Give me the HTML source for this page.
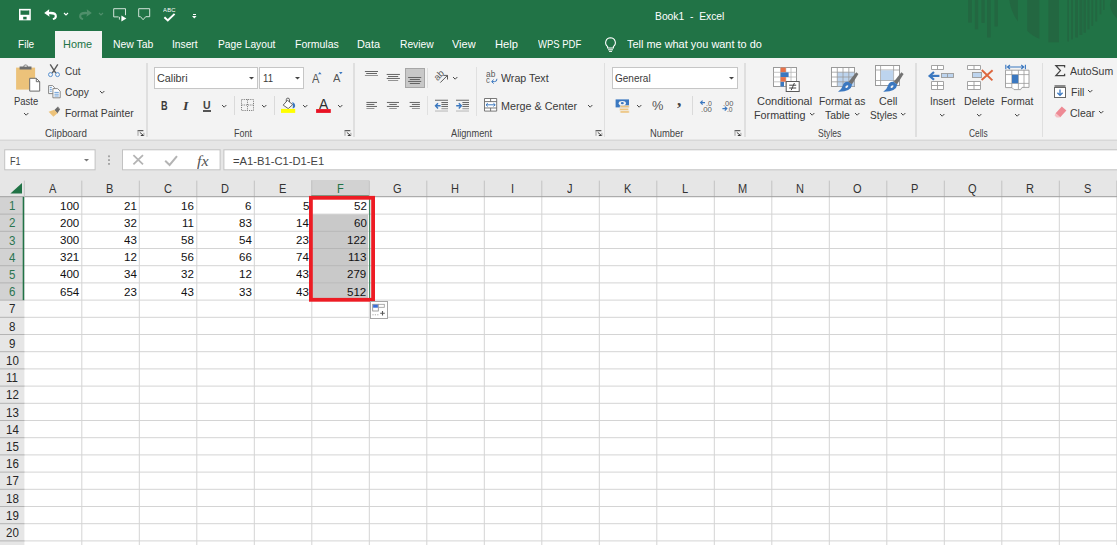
<!DOCTYPE html>
<html><head><meta charset="utf-8"><title>Book1 - Excel</title>
<style>
html,body{margin:0;padding:0}
body{width:1117px;height:545px;overflow:hidden;position:relative;background:#fff;font-family:"Liberation Sans",sans-serif}
.t{position:absolute;white-space:pre;line-height:1;transform-origin:0 0}
.a{position:absolute}
svg{overflow:visible}
</style></head><body>
<div class="a" style="left:0px;top:0px;width:1117px;height:57.5px;background:#217346;"></div>
<svg class="a" style="left:0px;top:0px" width="1117" height="57" viewBox="0 0 1117 57"><rect x="968.2" y="0" width="3.6" height="22.6" fill="#236741"/><rect x="974.9" y="0" width="3.3" height="29.4" fill="#236741"/><rect x="981.4" y="0" width="3.3" height="22.9" fill="#236741"/><rect x="987.1" y="0" width="3.6" height="37.5" fill="#236741"/><rect x="994.5" y="0" width="3.3" height="26.5" fill="#236741"/><rect x="1048.4" y="0" width="10.6" height="42.3" fill="#236741"/><rect x="1067.3" y="0" width="1.7" height="41.5" fill="#236741"/><rect x="1071.2" y="0" width="1.8" height="39.4" fill="#236741"/><rect x="1075.2" y="0" width="2.8" height="37.5" fill="#236741"/><rect x="1079.5" y="0" width="2.9" height="35" fill="#236741"/><rect x="1083.5" y="0" width="2.5" height="32.7" fill="#236741"/><rect x="1087.4" y="0" width="2.1" height="29.4" fill="#236741"/><rect x="1091.4" y="0" width="1.7" height="25.8" fill="#236741"/><rect x="1095.3" y="0" width="1.8" height="21.5" fill="#236741"/><rect x="1099.6" y="0" width="1.8" height="14.3" fill="#236741"/><rect x="1103.2" y="0" width="1.4" height="10" fill="#236741"/><path d="M1009.3 0 Q1011 12 1017.9 21.5 V0 Z" fill="#236741"/><path d="M1027.2 0 V30.8 Q1032 36 1039.4 38.7 V0 Z" fill="#236741"/><path d="M1111 0 Q1107.5 9 1117 18.6 V0 Z" fill="#236741"/></svg>
<span class="t" style="left:654.60px;top:10.57px;font-size:11px;color:#fff;transform:scaleX(0.9381);">Book1  -  Excel</span>
<svg class="a" style="left:19.2px;top:8.6px" width="11.8" height="11.2" viewBox="0 0 11.8 11.2"><rect x="0.75" y="0.6" width="10.3" height="10" fill="none" stroke="#fff" stroke-width="1.5"/><rect x="1" y="5.8" width="9.8" height="5" fill="#fff"/><rect x="4.2" y="7.8" width="3.4" height="2.6" fill="#217346"/><rect x="2.6" y="0.4" width="6.6" height="1.1" fill="#fff" opacity="0.55"/></svg>
<svg class="a" style="left:44px;top:9px" width="14" height="12" viewBox="0 0 14 12"><path d="M0.2 3.9 L5.2 0.2 L5 2.9 Q12.9 2.4 12.9 7.2 Q12.9 10.2 9.2 11 L8.6 9.4 Q10.9 8.6 10.8 7 Q10.6 4.8 5 5.2 L5.6 7.8 Z" fill="#fff"/></svg>
<svg class="a" style="left:63.1px;top:12.1px" width="6" height="4" viewBox="0 0 6 4"><path d="M1 1 L3 3 L5 1" fill="none" stroke="#fff" stroke-width="1.1"/></svg>
<svg class="a" style="left:78.2px;top:9px" width="14" height="12" viewBox="0 0 14 12"><path d="M13.8 3.9 L8.8 0.2 L9 2.9 Q1.1 2.4 1.1 7.2 Q1.1 10.2 4.8 11 L5.4 9.4 Q3.1 8.6 3.2 7 Q3.4 4.8 9 5.2 L8.4 7.8 Z" fill="#4f8f6b"/></svg>
<svg class="a" style="left:97.8px;top:12.1px" width="6" height="4" viewBox="0 0 6 4"><path d="M1 1 L3 3 L5 1" fill="none" stroke="#4f8f6b" stroke-width="1.1"/></svg>
<svg class="a" style="left:113px;top:8px" width="14" height="14" viewBox="0 0 14 14"><path d="M5.6 8.9 H0.7 V0.7 H12.5 V7.2" fill="none" stroke="#e4efe8" stroke-width="0.9"/><path d="M6.4 8.9 V11.6" stroke="#e4efe8" stroke-width="0.9"/><path d="M8.4 7.4 L13.4 10.6 L8.4 13.6 Z" fill="#fff"/></svg>
<svg class="a" style="left:138px;top:8px" width="13" height="13" viewBox="0 0 13 13"><path d="M0.7 0.7 H11.7 V8.7 H7.7 L5.1 11.7 L2.5 8.7 H0.7 Z" fill="none" stroke="#e4efe8" stroke-width="0.9"/></svg>
<span class="t" style="left:163.30px;top:6.55px;font-size:6.2px;color:#fff;transform:scaleX(0.9413);letter-spacing:0.3px;">ABC</span>
<svg class="a" style="left:163px;top:13px" width="13" height="9" viewBox="0 0 13 9"><path d="M1.4 4.2 L4.8 7.4 L11.6 0.9" fill="none" stroke="#fff" stroke-width="2"/></svg>
<div class="a" style="left:192.6px;top:13.5px;width:3.6px;height:1px;background:#fff;"></div>
<svg class="a" style="left:192.1px;top:15.9px" width="4.6" height="2.6" viewBox="0 0 4.6 2.6"><path d="M0 0 H4.6 L2.3 2.6 Z" fill="#fff"/></svg>
<div class="a" style="left:55px;top:31px;width:46.5px;height:27px;background:#f3f3f3;"></div>
<span class="t" style="left:18.00px;top:38.57px;font-size:11px;color:#fff;transform:scaleX(0.9140);">File</span>
<span class="t" style="left:112.50px;top:38.57px;font-size:11px;color:#fff;transform:scaleX(0.9460);">New Tab</span>
<span class="t" style="left:172.40px;top:38.57px;font-size:11px;color:#fff;transform:scaleX(0.9305);">Insert</span>
<span class="t" style="left:217.80px;top:38.57px;font-size:11px;color:#fff;transform:scaleX(0.9292);">Page Layout</span>
<span class="t" style="left:294.50px;top:38.57px;font-size:11px;color:#fff;transform:scaleX(0.9533);">Formulas</span>
<span class="t" style="left:357.20px;top:38.57px;font-size:11px;color:#fff;transform:scaleX(0.9899);">Data</span>
<span class="t" style="left:399.80px;top:38.57px;font-size:11px;color:#fff;transform:scaleX(0.9316);">Review</span>
<span class="t" style="left:452.40px;top:38.57px;font-size:11px;color:#fff;transform:scaleX(0.9981);">View</span>
<span class="t" style="left:495.00px;top:38.57px;font-size:11px;color:#fff;transform:scaleX(1.0167);">Help</span>
<span class="t" style="left:537.60px;top:38.57px;font-size:11px;color:#fff;transform:scaleX(0.8621);">WPS PDF</span>
<span class="t" style="left:627.20px;top:38.57px;font-size:11px;color:#fff;transform:scaleX(0.9931);">Tell me what you want to do</span>
<span class="t" style="left:63.40px;top:38.57px;font-size:11px;color:#217346;transform:scaleX(0.9951);">Home</span>
<svg class="a" style="left:603.5px;top:37px" width="13" height="15" viewBox="0 0 13 15"><path d="M6.5 0.8 A4.9 4.9 0 0 1 9.4 9.6 V11 H3.6 V9.6 A4.9 4.9 0 0 1 6.5 0.8 Z" fill="none" stroke="#fff" stroke-width="1.1"/><path d="M4 12.8 H9 M5 14.4 H8" stroke="#fff" stroke-width="1"/></svg>
<div class="a" style="left:0px;top:57.5px;width:1117px;height:82px;background:#f3f3f3;"></div>
<div class="a" style="left:146.1px;top:62.5px;width:1.8px;height:74px;background:#dfdfdf;"></div>
<div class="a" style="left:353.1px;top:62.5px;width:1.8px;height:74px;background:#dfdfdf;"></div>
<div class="a" style="left:603.7px;top:62.5px;width:1.8px;height:74px;background:#dfdfdf;"></div>
<div class="a" style="left:743.8px;top:62.5px;width:1.8px;height:74px;background:#dfdfdf;"></div>
<div class="a" style="left:915.3px;top:62.5px;width:1.8px;height:74px;background:#dfdfdf;"></div>
<div class="a" style="left:1041.6px;top:62.5px;width:1.8px;height:74px;background:#dfdfdf;"></div>
<svg class="a" style="left:15px;top:64px" width="26" height="30" viewBox="0 0 26 30"><rect x="1.1" y="3.6" width="19" height="22" fill="#ecc27a"/><path d="M4.6 5.6 V2.6 H8.4 Q8.4 0.4 10.6 0.4 Q12.8 0.4 12.8 2.6 H16.5 V5.6 Z" fill="#6e6e6e"/><rect x="9.4" y="1.4" width="2.4" height="1.3" fill="#f3f3f3"/><path d="M14.7 14.3 H21.3 L24.7 17.7 V27.1 H14.7 Z" fill="#fff" stroke="#6b6b6b" stroke-width="1"/><path d="M21.3 14.3 V17.7 H24.7" fill="none" stroke="#6b6b6b" stroke-width="1"/></svg>
<span class="t" style="left:13.80px;top:95.87px;font-size:11px;color:#3a3a3a;transform:scaleX(0.8603);">Paste</span>
<svg class="a" style="left:22.8px;top:112.1px" width="6.4" height="4.2" viewBox="0 0 6.4 4.2"><path d="M1 1 L3.2 3.2 L5.4 1" fill="none" stroke="#444" stroke-width="1"/></svg>
<svg class="a" style="left:47px;top:64px" width="14" height="14" viewBox="0 0 14 14"><path d="M3.2 0.4 L8.8 9.2 M10.8 0.4 L5.2 9.2" fill="none" stroke="#5a5a5a" stroke-width="1.4"/><circle cx="3.5" cy="10.6" r="2" fill="none" stroke="#4a88cc" stroke-width="0.9"/><circle cx="10.5" cy="10.6" r="2" fill="none" stroke="#4a88cc" stroke-width="0.9"/></svg>
<span class="t" style="left:64.70px;top:65.97px;font-size:11px;color:#3a3a3a;transform:scaleX(0.9055);">Cut</span>
<svg class="a" style="left:48px;top:85px" width="13" height="14" viewBox="0 0 13 14"><path d="M0.6 0.6 H4.6 L6.4 2.4 V8.6 H0.6 Z" fill="#fff" stroke="#7a7a7a" stroke-width="0.9"/><path d="M4.9 3.6 H9.6 L12.2 6.2 V12.8 H4.9 Z" fill="#fff" stroke="#7a7a7a" stroke-width="0.9"/><path d="M6.4 7.4 H10.8 M6.4 9.2 H10.8 M6.4 11 H10.8" stroke="#4a88cc" stroke-width="0.8"/><path d="M1.8 2.6 H3.8 M1.8 4.4 H3.8 M1.8 6.2 H3.8" stroke="#4a88cc" stroke-width="0.8"/></svg>
<span class="t" style="left:64.70px;top:86.87px;font-size:11px;color:#3a3a3a;transform:scaleX(0.9307);">Copy</span>
<svg class="a" style="left:99px;top:89.5px" width="6.4" height="4.2" viewBox="0 0 6.4 4.2"><path d="M1 1 L3.2 3.2 L5.4 1" fill="none" stroke="#444" stroke-width="1"/></svg>
<svg class="a" style="left:48px;top:106px" width="14" height="13" viewBox="0 0 14 13"><path d="M6.5 4 L9.9 0.6 L12.2 2.9 L9.3 7.4 Z" fill="#6a6a6a"/><path d="M0.6 5.7 L6.3 3.8 L9.5 7.2 L5.4 10.8 Z" fill="#ecc27a"/><path d="M10.3 1.6 L11.4 2.7" stroke="#f3f3f3" stroke-width="0.7"/></svg>
<span class="t" style="left:64.70px;top:107.67px;font-size:11px;color:#3a3a3a;transform:scaleX(0.9444);">Format Painter</span>
<span class="t" style="left:44.60px;top:128.57px;font-size:10.4px;color:#444;transform:scaleX(0.9435);">Clipboard</span>
<svg class="a" style="left:137.1px;top:130.3px" width="8" height="7" viewBox="0 0 8 7"><path d="M0.6 0.7 H6.4" stroke="#3a3a3a" stroke-width="1" fill="none"/><path d="M1 0.7 V5.8" stroke="#a0a0a0" stroke-width="1" fill="none"/><path d="M2.8 2.4 L6.2 5.2" stroke="#444" stroke-width="1" fill="none"/><path d="M3.8 5.5 H7" stroke="#3a3a3a" stroke-width="1" fill="none"/><path d="M6.9 2.8 V5.8" stroke="#a0a0a0" stroke-width="1" fill="none"/></svg>
<div class="a" style="left:154px;top:67px;width:103.5px;height:22px;background:#fff;border:1px solid #c6c6c6;box-sizing:border-box;"></div>
<span class="t" style="left:156.60px;top:72.77px;font-size:11px;color:#3a3a3a;transform:scaleX(0.9816);">Calibri</span>
<svg class="a" style="left:248.5px;top:77.1px" width="5" height="2.6" viewBox="0 0 5 2.6"><path d="M0 0 H5 L2.5 2.6 Z" fill="#444"/></svg>
<div class="a" style="left:259.4px;top:67px;width:44.6px;height:22px;background:#fff;border:1px solid #c6c6c6;box-sizing:border-box;"></div>
<span class="t" style="left:262.60px;top:72.77px;font-size:11px;color:#3a3a3a;transform:scaleX(0.8757);">11</span>
<svg class="a" style="left:294.9px;top:77.1px" width="5" height="2.6" viewBox="0 0 5 2.6"><path d="M0 0 H5 L2.5 2.6 Z" fill="#444"/></svg>
<span class="t" style="left:312.40px;top:72.64px;font-size:12px;color:#555;transform:scaleX(0.9245);">A</span>
<svg class="a" style="left:318.1px;top:71.5px" width="3.6" height="2.2" viewBox="0 0 3.6 2.2"><path d="M0 2.2 L1.8 0 L3.6 2.2 Z" fill="#3b78c0"/></svg>
<span class="t" style="left:333.20px;top:73.44px;font-size:11.4px;color:#555;transform:scaleX(0.9732);">A</span>
<svg class="a" style="left:338.7px;top:71.9px" width="3.6" height="2.2" viewBox="0 0 3.6 2.2"><path d="M0 0 L1.8 2.2 L3.6 0 Z" fill="#3b78c0"/></svg>
<span class="t" style="left:160.90px;top:99.74px;font-size:12px;color:#3a3a3a;transform:scaleX(0.7616);font-weight:bold;">B</span>
<span class="t" style="left:183.40px;top:99.40px;font-size:13px;color:#3a3a3a;transform:scaleX(1.0674);font-family:'Liberation Serif',serif;font-weight:bold;font-style:italic;">I</span>
<span class="t" style="left:203.20px;top:99.86px;font-size:11.5px;color:#444;transform:scaleX(0.9151);font-weight:bold;">U</span>
<div class="a" style="left:203px;top:110.4px;width:8.2px;height:1.2px;background:#555;"></div>
<svg class="a" style="left:220.8px;top:104.1px" width="6.4" height="4.2" viewBox="0 0 6.4 4.2"><path d="M1 1 L3.2 3.2 L5.4 1" fill="none" stroke="#444" stroke-width="1"/></svg>
<div class="a" style="left:234px;top:96px;width:1px;height:19px;background:#dadada;"></div>
<svg class="a" style="left:241px;top:99px" width="13" height="12" viewBox="0 0 13 12"><path d="M0.5 0.5 H12.5 V11.5 H0.5 Z M6.5 0.5 V11.5 M0.5 6 H12.5" fill="none" stroke="#7a7a7a" stroke-width="1" stroke-dasharray="1.1 1.1"/></svg>
<svg class="a" style="left:261.2px;top:104.1px" width="6.4" height="4.2" viewBox="0 0 6.4 4.2"><path d="M1 1 L3.2 3.2 L5.4 1" fill="none" stroke="#444" stroke-width="1"/></svg>
<div class="a" style="left:273.8px;top:96px;width:1px;height:19px;background:#dadada;"></div>
<svg class="a" style="left:0px;top:0px" width="1117" height="140" viewBox="0 0 1117 140"><path d="M283.2 105.1 L287.5 100.3 L292.7 104.7 L288.2 108.6 Z" fill="#fff" stroke="#555" stroke-width="0.9"/><path d="M286.3 101.6 V99.6 Q286.3 98.1 287.9 98.1 Q289.5 98.1 289.5 99.8 V102" fill="none" stroke="#555" stroke-width="0.9"/><path d="M292.2 102 Q295.6 103.4 295.1 106.6 Q294.4 108.6 292.6 108.6 Q293.8 105.6 292.2 102 Z" fill="#3b78c0"/></svg>
<svg class="a" style="left:0px;top:0px" width="1117" height="140" viewBox="0 0 1117 140"><rect x="281" y="108.9" width="14.2" height="4" fill="#ffff00"/></svg>
<svg class="a" style="left:302px;top:103.9px" width="6.4" height="4.2" viewBox="0 0 6.4 4.2"><path d="M1 1 L3.2 3.2 L5.4 1" fill="none" stroke="#444" stroke-width="1"/></svg>
<span class="t" style="left:318.80px;top:96.65px;font-size:14.4px;color:#2e2e2e;transform:scaleX(0.9579);">A</span>
<svg class="a" style="left:0px;top:0px" width="1117" height="140" viewBox="0 0 1117 140"><rect x="316.1" y="109.1" width="14.7" height="3.8" fill="#e81123"/></svg>
<svg class="a" style="left:337px;top:103.9px" width="6.4" height="4.2" viewBox="0 0 6.4 4.2"><path d="M1 1 L3.2 3.2 L5.4 1" fill="none" stroke="#444" stroke-width="1"/></svg>
<span class="t" style="left:233.60px;top:128.57px;font-size:10.4px;color:#444;transform:scaleX(0.8650);">Font</span>
<svg class="a" style="left:344.1px;top:130.3px" width="8" height="7" viewBox="0 0 8 7"><path d="M0.6 0.7 H6.4" stroke="#3a3a3a" stroke-width="1" fill="none"/><path d="M1 0.7 V5.8" stroke="#a0a0a0" stroke-width="1" fill="none"/><path d="M2.8 2.4 L6.2 5.2" stroke="#444" stroke-width="1" fill="none"/><path d="M3.8 5.5 H7" stroke="#3a3a3a" stroke-width="1" fill="none"/><path d="M6.9 2.8 V5.8" stroke="#a0a0a0" stroke-width="1" fill="none"/></svg>
<svg class="a" style="left:0px;top:0px" width="1117" height="140" viewBox="0 0 1117 140"><rect x="364.9" y="71.05" width="13.1" height="0.95" fill="#5e5e5e"/><rect x="366.2" y="73.05" width="10.8" height="0.95" fill="#5e5e5e"/><rect x="364.9" y="75.05" width="13.1" height="0.95" fill="#8e8e8e"/></svg>
<svg class="a" style="left:0px;top:0px" width="1117" height="140" viewBox="0 0 1117 140"><rect x="386.7" y="73.95" width="13.2" height="0.95" fill="#5e5e5e"/><rect x="388" y="76.05" width="10.2" height="0.95" fill="#5e5e5e"/><rect x="386.7" y="77.95" width="13.2" height="0.95" fill="#5e5e5e"/><rect x="388" y="80.05" width="10.2" height="0.95" fill="#8e8e8e"/></svg>
<div class="a" style="left:405px;top:68px;width:20px;height:20px;background:#c8c8c8;border:1px solid #a6a6a6;box-sizing:border-box;"></div>
<svg class="a" style="left:0px;top:0px" width="1117" height="140" viewBox="0 0 1117 140"><rect x="408.1" y="77.05" width="13.1" height="0.95" fill="#5e5e5e"/><rect x="409.8" y="79.05" width="10.1" height="0.95" fill="#5e5e5e"/><rect x="408.1" y="80.95" width="13.1" height="0.95" fill="#5e5e5e"/><rect x="409.8" y="83.05" width="10.1" height="0.95" fill="#5e5e5e"/></svg>
<div class="a" style="left:427.4px;top:68.2px;width:1px;height:19.5px;background:#e0e0e0;"></div>
<svg class="a" style="left:0px;top:0px" width="1117" height="140" viewBox="0 0 1117 140"><text x="433.8" y="78.6" font-size="9.4" font-family="Liberation Sans" fill="#5a5a5a" transform="rotate(-45 438.8 75.6)">ab</text><path d="M440.3 82.6 L447.4 75.5 M443.4 75.4 H447.5 V79.5" fill="none" stroke="#5a5a5a" stroke-width="1"/></svg>
<svg class="a" style="left:452.4px;top:76.1px" width="6.4" height="4.2" viewBox="0 0 6.4 4.2"><path d="M1 1 L3.2 3.2 L5.4 1" fill="none" stroke="#444" stroke-width="1"/></svg>
<div class="a" style="left:475.8px;top:67px;width:1px;height:49.4px;background:#e0e0e0;"></div>
<span class="t" style="left:486.00px;top:69.93px;font-size:9px;color:#5a5a5a;transform:scaleX(0.9290);">ab</span>
<span class="t" style="left:486.00px;top:76.03px;font-size:9px;color:#5a5a5a;transform:scaleX(0.8444);">c</span>
<svg class="a" style="left:0px;top:0px" width="1117" height="140" viewBox="0 0 1117 140"><path d="M496.9 78.8 Q497.2 81.6 494.6 81.6 H492" fill="none" stroke="#3b78c0" stroke-width="1"/><path d="M493.7 79.6 L491.6 81.6 L493.7 83.6" fill="none" stroke="#3b78c0" stroke-width="1"/></svg>
<span class="t" style="left:501.20px;top:72.77px;font-size:11px;color:#3a3a3a;transform:scaleX(0.9692);">Wrap Text</span>
<svg class="a" style="left:0px;top:0px" width="1117" height="140" viewBox="0 0 1117 140"><rect x="366.4" y="101.95" width="10.6" height="0.95" fill="#5e5e5e"/><rect x="366.4" y="103.95" width="8" height="0.95" fill="#5e5e5e"/><rect x="366.4" y="105.95" width="10.6" height="0.95" fill="#5e5e5e"/><rect x="366.4" y="108.05" width="8" height="0.95" fill="#8e8e8e"/></svg>
<svg class="a" style="left:0px;top:0px" width="1117" height="140" viewBox="0 0 1117 140"><rect x="386.9" y="101.95" width="12.1" height="0.95" fill="#5e5e5e"/><rect x="389.3" y="103.95" width="7.5" height="0.95" fill="#5e5e5e"/><rect x="386.9" y="105.95" width="12.1" height="0.95" fill="#5e5e5e"/><rect x="389.3" y="108.05" width="7.5" height="0.95" fill="#8e8e8e"/></svg>
<svg class="a" style="left:0px;top:0px" width="1117" height="140" viewBox="0 0 1117 140"><rect x="409.6" y="101.95" width="10.3" height="0.95" fill="#5e5e5e"/><rect x="411.9" y="103.95" width="8" height="0.95" fill="#5e5e5e"/><rect x="409.6" y="105.95" width="10.3" height="0.95" fill="#5e5e5e"/><rect x="411.9" y="108.05" width="8" height="0.95" fill="#8e8e8e"/></svg>
<div class="a" style="left:427.4px;top:96.4px;width:1px;height:19px;background:#e0e0e0;"></div>
<svg class="a" style="left:435px;top:100px" width="13" height="12" viewBox="0 0 13 12"><path d="M0.8 5.8 H5.6 M3 3.2 L0.5 5.8 L3 8.4" fill="none" stroke="#3b78c0" stroke-width="1.4"/><rect x="0" y="-0.25" width="13" height="0.95" fill="#5e5e5e"/><rect x="6.4" y="2.05" width="6.6" height="0.95" fill="#5e5e5e"/><rect x="6.4" y="3.95" width="6.6" height="0.95" fill="#5e5e5e"/><rect x="6.4" y="5.95" width="6.6" height="0.95" fill="#5e5e5e"/><rect x="6.4" y="8.25" width="6.6" height="0.95" fill="#8e8e8e"/><rect x="0" y="10.55" width="13" height="0.95" fill="#b4b4b4"/></svg>
<svg class="a" style="left:456.2px;top:100px" width="13" height="12" viewBox="0 0 13 12"><path d="M0.2 5.8 H5 M2.8 3.2 L5.3 5.8 L2.8 8.4" fill="none" stroke="#3b78c0" stroke-width="1.4"/><rect x="0" y="-0.25" width="13" height="0.95" fill="#5e5e5e"/><rect x="6.4" y="2.05" width="6.6" height="0.95" fill="#5e5e5e"/><rect x="6.4" y="3.95" width="6.6" height="0.95" fill="#5e5e5e"/><rect x="6.4" y="5.95" width="6.6" height="0.95" fill="#5e5e5e"/><rect x="6.4" y="8.25" width="6.6" height="0.95" fill="#8e8e8e"/><rect x="0" y="10.55" width="13" height="0.95" fill="#b4b4b4"/></svg>
<svg class="a" style="left:484px;top:98.2px" width="13.2" height="13.6" viewBox="0 0 13.2 13.6"><path d="M0.5 0.5 H12.7 V13.1 H0.5 Z M0.5 3.6 H12.7 M0.5 10 H12.7 M6.6 0.5 V3.6 M6.6 10 V13.1" fill="#fff" stroke="#6a6a6a" stroke-width="0.9"/><path d="M2 6.8 H11.2 M3.8 5.2 L2 6.8 L3.8 8.4 M9.4 5.2 L11.2 6.8 L9.4 8.4" fill="none" stroke="#3b78c0" stroke-width="1"/></svg>
<span class="t" style="left:501.20px;top:101.07px;font-size:11px;color:#3a3a3a;transform:scaleX(0.9788);">Merge &amp; Center</span>
<svg class="a" style="left:586.8px;top:104.1px" width="6.4" height="4.2" viewBox="0 0 6.4 4.2"><path d="M1 1 L3.2 3.2 L5.4 1" fill="none" stroke="#444" stroke-width="1"/></svg>
<span class="t" style="left:451.20px;top:128.57px;font-size:10.4px;color:#444;transform:scaleX(0.8865);">Alignment</span>
<svg class="a" style="left:594.5px;top:130.3px" width="8" height="7" viewBox="0 0 8 7"><path d="M0.6 0.7 H6.4" stroke="#3a3a3a" stroke-width="1" fill="none"/><path d="M1 0.7 V5.8" stroke="#a0a0a0" stroke-width="1" fill="none"/><path d="M2.8 2.4 L6.2 5.2" stroke="#444" stroke-width="1" fill="none"/><path d="M3.8 5.5 H7" stroke="#3a3a3a" stroke-width="1" fill="none"/><path d="M6.9 2.8 V5.8" stroke="#a0a0a0" stroke-width="1" fill="none"/></svg>
<div class="a" style="left:612px;top:67px;width:125.6px;height:22px;background:#fff;border:1px solid #c6c6c6;box-sizing:border-box;"></div>
<span class="t" style="left:614.80px;top:72.77px;font-size:11px;color:#3a3a3a;transform:scaleX(0.9097);">General</span>
<svg class="a" style="left:728.5px;top:77.1px" width="5" height="2.6" viewBox="0 0 5 2.6"><path d="M0 0 H5 L2.5 2.6 Z" fill="#444"/></svg>
<svg class="a" style="left:614.6px;top:98.6px" width="15" height="14.4" viewBox="0 0 15 14.4"><rect x="0.6" y="0.4" width="13.4" height="8" fill="#3b78c0"/><ellipse cx="7.3" cy="4.2" rx="3.6" ry="2.3" fill="#f3f3f3"/><ellipse cx="7.3" cy="4.2" rx="1.5" ry="1.1" fill="#3b78c0"/><path d="M5.2 6.6 H14.2 V8.8 H5.2 Z M4.6 9.2 H13.6 V11.4 H4.6 Z M5.2 11.8 H14.2 V14 H5.2 Z" fill="#ecc27a" stroke="#f3f3f3" stroke-width="0.5"/></svg>
<svg class="a" style="left:635.8px;top:104.1px" width="6.4" height="4.2" viewBox="0 0 6.4 4.2"><path d="M1 1 L3.2 3.2 L5.4 1" fill="none" stroke="#444" stroke-width="1"/></svg>
<span class="t" style="left:651.60px;top:99.48px;font-size:13.4px;color:#555;transform:scaleX(0.9568);">%</span>
<span class="t" style="left:676.60px;top:91.80px;font-size:17px;color:#444;transform:scaleX(1.0353);font-family:'Liberation Serif',serif;font-weight:bold;">,</span>
<div class="a" style="left:692px;top:96px;width:1px;height:19px;background:#dadada;"></div>
<svg class="a" style="left:700px;top:100px" width="12" height="12" viewBox="0 0 12 12"><path d="M0.6 2.6 H5 M2.6 0.6 L0.6 2.6 L2.6 4.6" fill="none" stroke="#3b78c0" stroke-width="1.2"/></svg>
<span class="t" style="left:705.80px;top:99.79px;font-size:7px;color:#5a5a5a;transform:scaleX(0.9935);">.0</span>
<span class="t" style="left:700.80px;top:106.19px;font-size:7px;color:#5a5a5a;transform:scaleX(1.1099);">.00</span>
<span class="t" style="left:722.60px;top:99.79px;font-size:7px;color:#5a5a5a;transform:scaleX(1.0688);">.00</span>
<svg class="a" style="left:721.6px;top:106px" width="12" height="6" viewBox="0 0 12 6"><path d="M0.4 2.6 H4.8 M2.8 0.6 L4.8 2.6 L2.8 4.6" fill="none" stroke="#3b78c0" stroke-width="1.2"/></svg>
<span class="t" style="left:727.40px;top:106.19px;font-size:7px;color:#5a5a5a;transform:scaleX(0.9593);">.0</span>
<span class="t" style="left:650.20px;top:128.57px;font-size:10.4px;color:#444;transform:scaleX(0.9030);">Number</span>
<svg class="a" style="left:733.9px;top:130.3px" width="8" height="7" viewBox="0 0 8 7"><path d="M0.6 0.7 H6.4" stroke="#3a3a3a" stroke-width="1" fill="none"/><path d="M1 0.7 V5.8" stroke="#a0a0a0" stroke-width="1" fill="none"/><path d="M2.8 2.4 L6.2 5.2" stroke="#444" stroke-width="1" fill="none"/><path d="M3.8 5.5 H7" stroke="#3a3a3a" stroke-width="1" fill="none"/><path d="M6.9 2.8 V5.8" stroke="#a0a0a0" stroke-width="1" fill="none"/></svg>
<svg class="a" style="left:772.6px;top:67.4px" width="27" height="25" viewBox="0 0 27 25"><rect x="0.5" y="0.5" width="23" height="19" fill="#fff" stroke="#9a9a9a" stroke-width="1"/><path d="M0.5 5.3 H23.5 M0.5 10 H23.5 M0.5 14.8 H23.5 M7.6 0.5 V19.5 M12.8 0.5 V19.5 M18 0.5 V19.5" stroke="#b8b8b8" stroke-width="0.8" fill="none"/><rect x="7.6" y="0.6" width="5.2" height="4.6" fill="#e8734a"/><rect x="7.6" y="5.4" width="8" height="4.6" fill="#3b78c0"/><rect x="7.6" y="10.1" width="5.2" height="4.6" fill="#e8734a"/><rect x="7.6" y="14.9" width="3.4" height="4.6" fill="#3b78c0"/><rect x="13.2" y="14.5" width="13" height="10" fill="#fff" stroke="#5a5a5a" stroke-width="1"/><path d="M16.2 18.2 H23.2 M16.2 21 H23.2 M21.4 16 L18.2 23.2" stroke="#444" stroke-width="1" fill="none"/></svg>
<span class="t" style="left:756.80px;top:95.57px;font-size:11px;color:#3a3a3a;transform:scaleX(1.0029);">Conditional</span>
<span class="t" style="left:753.80px;top:109.67px;font-size:11px;color:#3a3a3a;transform:scaleX(0.9777);">Formatting</span>
<svg class="a" style="left:808.8px;top:111.7px" width="6.4" height="4.2" viewBox="0 0 6.4 4.2"><path d="M1 1 L3.2 3.2 L5.4 1" fill="none" stroke="#444" stroke-width="1"/></svg>
<svg class="a" style="left:830.8px;top:67.4px" width="28" height="25" viewBox="0 0 28 25"><rect x="0.5" y="0.5" width="23" height="19" fill="#fff" stroke="#9a9a9a" stroke-width="1"/><rect x="6.3" y="5.2" width="17" height="14" fill="#bdd4ee"/><path d="M0.5 5.2 H23.5 M0.5 10 H23.5 M0.5 14.8 H23.5 M6.3 0.5 V19.5 M12 0.5 V19.5 M17.8 0.5 V19.5" stroke="#9a9a9a" stroke-width="0.8" fill="none"/></svg>
<svg class="a" style="left:0px;top:0px" width="1117" height="140" viewBox="0 0 1117 140"><g transform="translate(0 0)"><path d="M856.2 72.2 L858.4 74 L851.8 84.4 L848.4 82 Z" fill="#727272"/><path d="M848.2 81.8 L852.1 84.6 Q851.2 92 838 91.7 Q842 88.8 842.8 85.4 Q844.2 81.2 848.2 81.8 Z" fill="#3b78c0"/><ellipse cx="846.8" cy="86.6" rx="1.7" ry="1" fill="#f3f3f3" transform="rotate(-35 846.8 86.6)"/></g></svg>
<span class="t" style="left:819.40px;top:95.57px;font-size:11px;color:#3a3a3a;transform:scaleX(0.9372);">Format as</span>
<span class="t" style="left:825.20px;top:109.67px;font-size:11px;color:#3a3a3a;transform:scaleX(0.9431);">Table</span>
<svg class="a" style="left:853.8px;top:111.7px" width="6.4" height="4.2" viewBox="0 0 6.4 4.2"><path d="M1 1 L3.2 3.2 L5.4 1" fill="none" stroke="#444" stroke-width="1"/></svg>
<svg class="a" style="left:875px;top:65px" width="29" height="27" viewBox="0 0 29 27"><rect x="0.5" y="0.5" width="24" height="20" fill="#fff" stroke="#9a9a9a" stroke-width="1"/><path d="M0.5 5 H24.5 M0.5 15.5 H24.5 M5.6 0.5 V20.5 M18.6 0.5 V20.5" stroke="#9a9a9a" stroke-width="0.8" fill="none"/><rect x="6" y="5.4" width="12.2" height="9.7" fill="#bdd4ee"/></svg>
<svg class="a" style="left:0px;top:0px" width="1117" height="140" viewBox="0 0 1117 140"><g transform="translate(45.2 0)"><path d="M856.2 72.2 L858.4 74 L851.8 84.4 L848.4 82 Z" fill="#727272"/><path d="M848.2 81.8 L852.1 84.6 Q851.2 92 838 91.7 Q842 88.8 842.8 85.4 Q844.2 81.2 848.2 81.8 Z" fill="#3b78c0"/><ellipse cx="846.8" cy="86.6" rx="1.7" ry="1" fill="#f3f3f3" transform="rotate(-35 846.8 86.6)"/></g></svg>
<span class="t" style="left:879.20px;top:95.57px;font-size:11px;color:#3a3a3a;transform:scaleX(0.9710);">Cell</span>
<span class="t" style="left:869.80px;top:109.67px;font-size:11px;color:#3a3a3a;transform:scaleX(0.9147);">Styles</span>
<svg class="a" style="left:900.2px;top:111.7px" width="6.4" height="4.2" viewBox="0 0 6.4 4.2"><path d="M1 1 L3.2 3.2 L5.4 1" fill="none" stroke="#444" stroke-width="1"/></svg>
<span class="t" style="left:818.20px;top:128.57px;font-size:10.4px;color:#444;transform:scaleX(0.8262);">Styles</span>
<svg class="a" style="left:929px;top:65px" width="26" height="25" viewBox="0 0 26 25"><path d="M2.5 0.5 H14.5 V4.5 H2.5 Z M8.5 0.5 V4.5" fill="#fff" stroke="#9a9a9a" stroke-width="0.9"/><path d="M2.5 16.5 H14.5 V24.5 H2.5 Z M8.5 16.5 V24.5 M2.5 20.5 H14.5" fill="#fff" stroke="#9a9a9a" stroke-width="0.9"/><rect x="12.5" y="8.5" width="12" height="4" fill="#bdd4ee" stroke="#9a9a9a" stroke-width="0.9"/><path d="M18.5 8.5 V12.5" stroke="#9a9a9a" stroke-width="0.9"/><path d="M1.4 10.9 H10.4" fill="none" stroke="#3b78c0" stroke-width="2.2"/><path d="M5 7 L0.6 10.9 L5 14.8" fill="none" stroke="#3b78c0" stroke-width="2.2" stroke-linejoin="miter"/></svg>
<span class="t" style="left:929.80px;top:95.57px;font-size:11px;color:#3a3a3a;transform:scaleX(0.9087);">Insert</span>
<svg class="a" style="left:939px;top:112.5px" width="6.4" height="4.2" viewBox="0 0 6.4 4.2"><path d="M1 1 L3.2 3.2 L5.4 1" fill="none" stroke="#444" stroke-width="1"/></svg>
<svg class="a" style="left:967.4px;top:65px" width="26" height="25" viewBox="0 0 26 25"><path d="M0.5 0.5 H13.5 V4.5 H0.5 Z M7 0.5 V4.5" fill="#fff" stroke="#9a9a9a" stroke-width="0.9"/><path d="M0.5 16.5 H13.5 V24.5 H0.5 Z M7 16.5 V24.5 M0.5 20.5 H13.5" fill="#fff" stroke="#9a9a9a" stroke-width="0.9"/><rect x="5.5" y="7.5" width="9" height="5" fill="#bdd4ee" stroke="#9a9a9a" stroke-width="0.9"/><path d="M14.8 5 L25.4 15.4 M25.6 5.2 L14.6 15" fill="none" stroke="#dd673f" stroke-width="1.9"/></svg>
<span class="t" style="left:964.40px;top:95.57px;font-size:11px;color:#3a3a3a;transform:scaleX(0.9624);">Delete</span>
<svg class="a" style="left:976.2px;top:112.5px" width="6.4" height="4.2" viewBox="0 0 6.4 4.2"><path d="M1 1 L3.2 3.2 L5.4 1" fill="none" stroke="#444" stroke-width="1"/></svg>
<svg class="a" style="left:1004.6px;top:64.4px" width="26" height="27" viewBox="0 0 26 27"><path d="M2.6 3 H18.6 M0.8 0.8 V5.2 M20.4 0.8 V5.2 M5 1 L2.4 3 L5 5 M16.2 1 L18.8 3 L16.2 5" fill="none" stroke="#3b78c0" stroke-width="1.1"/><path d="M0.5 6.2 H24 V23.4 H17 L15.6 25.6 H9 L7 23.6 H0.5 Z" fill="#fff" stroke="#9a9a9a" stroke-width="0.9"/><path d="M0.5 10.6 H24 M0.5 19.4 H24 M6.8 6.2 V23.6 M13.4 6.2 V25 M19 6.2 V23.4" stroke="#9a9a9a" stroke-width="0.8" fill="none"/><rect x="7" y="10.8" width="6.2" height="8.4" fill="#3b78c0"/></svg>
<span class="t" style="left:1000.60px;top:95.57px;font-size:11px;color:#3a3a3a;transform:scaleX(0.9300);">Format</span>
<svg class="a" style="left:1013.6px;top:112.5px" width="6.4" height="4.2" viewBox="0 0 6.4 4.2"><path d="M1 1 L3.2 3.2 L5.4 1" fill="none" stroke="#444" stroke-width="1"/></svg>
<span class="t" style="left:969.40px;top:128.57px;font-size:10.4px;color:#444;transform:scaleX(0.8046);">Cells</span>
<svg class="a" style="left:1054.6px;top:65.4px" width="11" height="11.4" viewBox="0 0 11 11.4"><path d="M9.6 2.6 V0.7 H0.9 L5.4 5.6 L0.9 10.7 H9.6 V8.8" fill="none" stroke="#444" stroke-width="1.3" stroke-linejoin="miter"/></svg>
<span class="t" style="left:1070.20px;top:65.97px;font-size:11px;color:#3a3a3a;transform:scaleX(0.9548);">AutoSum</span>
<svg class="a" style="left:1053.8px;top:85px" width="12" height="13" viewBox="0 0 12 13"><path d="M0.5 1 H11.5" stroke="#444" stroke-width="1.2"/><rect x="0.5" y="2.5" width="11" height="10" fill="#fff" stroke="#666" stroke-width="1"/><path d="M6 4.4 V10.2 M3.4 7.8 L6 10.4 L8.6 7.8" fill="none" stroke="#3b78c0" stroke-width="1.3"/></svg>
<span class="t" style="left:1070.60px;top:86.87px;font-size:11px;color:#3a3a3a;transform:scaleX(0.9537);">Fill</span>
<svg class="a" style="left:1087px;top:88.7px" width="6.4" height="4.2" viewBox="0 0 6.4 4.2"><path d="M1 1 L3.2 3.2 L5.4 1" fill="none" stroke="#444" stroke-width="1"/></svg>
<svg class="a" style="left:1053.6px;top:106px" width="13" height="12" viewBox="0 0 13 12"><path d="M7.8 0.6 L12.4 4.6 L6.2 11.2 L1.6 7.2 Z" fill="#ee8a94"/><path d="M1.6 7.2 L6.2 11.2 L4.8 11.6 H2.6 L0.6 9.4 Z" fill="#f6c0c5"/></svg>
<span class="t" style="left:1070.20px;top:107.67px;font-size:11px;color:#3a3a3a;transform:scaleX(0.9511);">Clear</span>
<svg class="a" style="left:1098.2px;top:109.8px" width="6.4" height="4.2" viewBox="0 0 6.4 4.2"><path d="M1 1 L3.2 3.2 L5.4 1" fill="none" stroke="#444" stroke-width="1"/></svg>
<div class="a" style="left:0px;top:139.5px;width:1117px;height:57px;background:#e6e6e6;"></div>
<svg class="a" style="left:0px;top:0px" width="1117" height="145" viewBox="0 0 1117 145"><rect x="0" y="139.6" width="1117" height="1.1" fill="#d2d2d2"/></svg>
<svg class="a" style="left:0px;top:0px" width="1117" height="180" viewBox="0 0 1117 180"><rect x="4.7" y="149.8" width="90.4" height="20" fill="#fff" stroke="#c2c2c2" stroke-width="1"/></svg>
<span class="t" style="left:10.00px;top:155.17px;font-size:11.6px;color:#444;transform:scaleX(0.7830);">F1</span>
<svg class="a" style="left:84.1px;top:159.3px" width="5" height="2.6" viewBox="0 0 5 2.6"><path d="M0 0 H5 L2.5 2.6 Z" fill="#777"/></svg>
<svg class="a" style="left:0px;top:0px" width="1117" height="180" viewBox="0 0 1117 180"><rect x="108" y="155.4" width="2" height="1.8" fill="#a6a6a6"/><rect x="108" y="159.2" width="2" height="1.8" fill="#a6a6a6"/><rect x="108" y="163" width="2" height="1.8" fill="#a6a6a6"/></svg>
<svg class="a" style="left:0px;top:0px" width="1117" height="180" viewBox="0 0 1117 180"><rect x="122.5" y="149.8" width="97.6" height="20" fill="#fff" stroke="#c2c2c2" stroke-width="1"/></svg>
<svg class="a" style="left:133px;top:155.4px" width="10.4" height="9.6" viewBox="0 0 10.4 9.6"><path d="M0.4 0.2 L10 9.4 M10 0.2 L0.4 9.4" stroke="#b4b4b4" stroke-width="1.8" fill="none"/></svg>
<svg class="a" style="left:164px;top:155px" width="14" height="11" viewBox="0 0 14 11"><path d="M1.2 5.8 L5.6 10 L13 1.2" stroke="#b4b4b4" stroke-width="2" fill="none"/></svg>
<span class="t" style="left:197.20px;top:153.20px;font-size:15.5px;color:#555;transform:scaleX(1.0370);font-family:'Liberation Serif',serif;font-style:italic;">fx</span>
<svg class="a" style="left:0px;top:0px" width="1117" height="180" viewBox="0 0 1117 180"><rect x="223.9" y="149.8" width="899" height="20" fill="#fff" stroke="#c2c2c2" stroke-width="1"/></svg>
<span class="t" style="left:232.90px;top:155.17px;font-size:11.6px;color:#444;transform:scaleX(0.9667);">=A1-B1-C1-D1-E1</span>
<div class="a" style="left:23.9px;top:196.9px;width:1093.1px;height:348.1px;background:#fff;"></div>
<svg class="a" style="left:0px;top:0px" width="1117" height="545" viewBox="0 0 1117 545"><rect x="0" y="196.9" width="24.4" height="348.1" fill="#e6e6e6"/><rect x="0" y="196.9" width="24.4" height="103.2" fill="#d2d2d2"/></svg>
<div class="a" style="left:311.4px;top:179.6px;width:57.5px;height:17.3px;background:#d2d2d2;"></div>
<div class="a" style="left:311.4px;top:214.1px;width:56.5px;height:86px;background:#c9c9c9;"></div>
<svg class="a" style="left:0px;top:0px" width="1117" height="545" viewBox="0 0 1117 545"><rect x="81.30" y="196.90" width="1" height="348.10" fill="#d4d4d4"/><rect x="81.30" y="180.60" width="1" height="16.30" fill="#c2c2c2"/><rect x="138.80" y="196.90" width="1" height="348.10" fill="#d4d4d4"/><rect x="138.80" y="180.60" width="1" height="16.30" fill="#c2c2c2"/><rect x="196.30" y="196.90" width="1" height="348.10" fill="#d4d4d4"/><rect x="196.30" y="180.60" width="1" height="16.30" fill="#c2c2c2"/><rect x="253.80" y="196.90" width="1" height="348.10" fill="#d4d4d4"/><rect x="253.80" y="180.60" width="1" height="16.30" fill="#c2c2c2"/><rect x="311.30" y="196.90" width="1" height="348.10" fill="#d4d4d4"/><rect x="311.30" y="180.60" width="1" height="16.30" fill="#c2c2c2"/><rect x="368.80" y="196.90" width="1" height="348.10" fill="#d4d4d4"/><rect x="368.80" y="180.60" width="1" height="16.30" fill="#c2c2c2"/><rect x="426.30" y="196.90" width="1" height="348.10" fill="#d4d4d4"/><rect x="426.30" y="180.60" width="1" height="16.30" fill="#c2c2c2"/><rect x="483.80" y="196.90" width="1" height="348.10" fill="#d4d4d4"/><rect x="483.80" y="180.60" width="1" height="16.30" fill="#c2c2c2"/><rect x="541.30" y="196.90" width="1" height="348.10" fill="#d4d4d4"/><rect x="541.30" y="180.60" width="1" height="16.30" fill="#c2c2c2"/><rect x="598.80" y="196.90" width="1" height="348.10" fill="#d4d4d4"/><rect x="598.80" y="180.60" width="1" height="16.30" fill="#c2c2c2"/><rect x="656.30" y="196.90" width="1" height="348.10" fill="#d4d4d4"/><rect x="656.30" y="180.60" width="1" height="16.30" fill="#c2c2c2"/><rect x="713.80" y="196.90" width="1" height="348.10" fill="#d4d4d4"/><rect x="713.80" y="180.60" width="1" height="16.30" fill="#c2c2c2"/><rect x="771.30" y="196.90" width="1" height="348.10" fill="#d4d4d4"/><rect x="771.30" y="180.60" width="1" height="16.30" fill="#c2c2c2"/><rect x="828.80" y="196.90" width="1" height="348.10" fill="#d4d4d4"/><rect x="828.80" y="180.60" width="1" height="16.30" fill="#c2c2c2"/><rect x="886.30" y="196.90" width="1" height="348.10" fill="#d4d4d4"/><rect x="886.30" y="180.60" width="1" height="16.30" fill="#c2c2c2"/><rect x="943.80" y="196.90" width="1" height="348.10" fill="#d4d4d4"/><rect x="943.80" y="180.60" width="1" height="16.30" fill="#c2c2c2"/><rect x="1001.30" y="196.90" width="1" height="348.10" fill="#d4d4d4"/><rect x="1001.30" y="180.60" width="1" height="16.30" fill="#c2c2c2"/><rect x="1058.80" y="196.90" width="1" height="348.10" fill="#d4d4d4"/><rect x="1058.80" y="180.60" width="1" height="16.30" fill="#c2c2c2"/><rect x="1116.30" y="196.90" width="1" height="348.10" fill="#d4d4d4"/><rect x="1116.30" y="180.60" width="1" height="16.30" fill="#c2c2c2"/><rect x="23.90" y="213.60" width="1093.10" height="1" fill="#d4d4d4"/><rect x="0" y="213.60" width="24.40" height="1" fill="#b4b4b4"/><rect x="23.90" y="230.80" width="1093.10" height="1" fill="#d4d4d4"/><rect x="0" y="230.80" width="24.40" height="1" fill="#b4b4b4"/><rect x="23.90" y="248.00" width="1093.10" height="1" fill="#d4d4d4"/><rect x="0" y="248.00" width="24.40" height="1" fill="#b4b4b4"/><rect x="23.90" y="265.20" width="1093.10" height="1" fill="#d4d4d4"/><rect x="0" y="265.20" width="24.40" height="1" fill="#b4b4b4"/><rect x="23.90" y="282.40" width="1093.10" height="1" fill="#d4d4d4"/><rect x="0" y="282.40" width="24.40" height="1" fill="#b4b4b4"/><rect x="23.90" y="299.60" width="1093.10" height="1" fill="#d4d4d4"/><rect x="0" y="299.60" width="24.40" height="1" fill="#b4b4b4"/><rect x="23.90" y="316.80" width="1093.10" height="1" fill="#d4d4d4"/><rect x="0" y="316.80" width="24.40" height="1" fill="#b4b4b4"/><rect x="23.90" y="334.00" width="1093.10" height="1" fill="#d4d4d4"/><rect x="0" y="334.00" width="24.40" height="1" fill="#b4b4b4"/><rect x="23.90" y="351.20" width="1093.10" height="1" fill="#d4d4d4"/><rect x="0" y="351.20" width="24.40" height="1" fill="#b4b4b4"/><rect x="23.90" y="368.40" width="1093.10" height="1" fill="#d4d4d4"/><rect x="0" y="368.40" width="24.40" height="1" fill="#b4b4b4"/><rect x="23.90" y="385.60" width="1093.10" height="1" fill="#d4d4d4"/><rect x="0" y="385.60" width="24.40" height="1" fill="#b4b4b4"/><rect x="23.90" y="402.80" width="1093.10" height="1" fill="#d4d4d4"/><rect x="0" y="402.80" width="24.40" height="1" fill="#b4b4b4"/><rect x="23.90" y="420.00" width="1093.10" height="1" fill="#d4d4d4"/><rect x="0" y="420.00" width="24.40" height="1" fill="#b4b4b4"/><rect x="23.90" y="437.20" width="1093.10" height="1" fill="#d4d4d4"/><rect x="0" y="437.20" width="24.40" height="1" fill="#b4b4b4"/><rect x="23.90" y="454.40" width="1093.10" height="1" fill="#d4d4d4"/><rect x="0" y="454.40" width="24.40" height="1" fill="#b4b4b4"/><rect x="23.90" y="471.60" width="1093.10" height="1" fill="#d4d4d4"/><rect x="0" y="471.60" width="24.40" height="1" fill="#b4b4b4"/><rect x="23.90" y="488.80" width="1093.10" height="1" fill="#d4d4d4"/><rect x="0" y="488.80" width="24.40" height="1" fill="#b4b4b4"/><rect x="23.90" y="506.00" width="1093.10" height="1" fill="#d4d4d4"/><rect x="0" y="506.00" width="24.40" height="1" fill="#b4b4b4"/><rect x="23.90" y="523.20" width="1093.10" height="1" fill="#d4d4d4"/><rect x="0" y="523.20" width="24.40" height="1" fill="#b4b4b4"/><rect x="23.90" y="540.40" width="1093.10" height="1" fill="#d4d4d4"/><rect x="0" y="540.40" width="24.40" height="1" fill="#b4b4b4"/><rect x="311.40" y="230.80" width="56.50" height="1" fill="#b6b6b6"/><rect x="311.40" y="248.00" width="56.50" height="1" fill="#b6b6b6"/><rect x="311.40" y="265.20" width="56.50" height="1" fill="#b6b6b6"/><rect x="311.40" y="282.40" width="56.50" height="1" fill="#b6b6b6"/><rect x="0" y="196.20" width="1117" height="1" fill="#9e9e9e"/><rect x="23.80" y="180.60" width="1" height="16.30" fill="#c2c2c2"/><rect x="22.70" y="196.90" width="1.5" height="103.20" fill="#217346"/><rect x="311.40" y="195.50" width="57.50" height="1.6" fill="#217346"/><rect x="369.20" y="196.90" width="1" height="103.20" fill="#217346"/><path d="M22 183 V193.6 H10.4 Z" fill="#217346"/></svg>
<span class="t" style="left:48.97px;top:182.94px;font-size:12px;color:#333;transform:scaleX(0.9197);">A</span>
<span class="t" style="left:106.47px;top:182.94px;font-size:12px;color:#333;transform:scaleX(0.9197);">B</span>
<span class="t" style="left:163.67px;top:182.94px;font-size:12px;color:#333;transform:scaleX(0.9197);">C</span>
<span class="t" style="left:221.17px;top:182.94px;font-size:12px;color:#333;transform:scaleX(0.9197);">D</span>
<span class="t" style="left:278.97px;top:182.94px;font-size:12px;color:#333;transform:scaleX(0.9197);">E</span>
<span class="t" style="left:336.78px;top:182.94px;font-size:12px;color:#217346;transform:scaleX(0.9197);">F</span>
<span class="t" style="left:393.36px;top:182.94px;font-size:12px;color:#333;transform:scaleX(0.9197);">G</span>
<span class="t" style="left:451.17px;top:182.94px;font-size:12px;color:#333;transform:scaleX(0.9197);">H</span>
<span class="t" style="left:511.12px;top:182.94px;font-size:12px;color:#333;transform:scaleX(0.9197);">I</span>
<span class="t" style="left:567.39px;top:182.94px;font-size:12px;color:#333;transform:scaleX(0.9197);">J</span>
<span class="t" style="left:623.97px;top:182.94px;font-size:12px;color:#333;transform:scaleX(0.9197);">K</span>
<span class="t" style="left:682.08px;top:182.94px;font-size:12px;color:#333;transform:scaleX(0.9197);">L</span>
<span class="t" style="left:738.05px;top:182.94px;font-size:12px;color:#333;transform:scaleX(0.9197);">M</span>
<span class="t" style="left:796.17px;top:182.94px;font-size:12px;color:#333;transform:scaleX(0.9197);">N</span>
<span class="t" style="left:853.36px;top:182.94px;font-size:12px;color:#333;transform:scaleX(0.9197);">O</span>
<span class="t" style="left:911.47px;top:182.94px;font-size:12px;color:#333;transform:scaleX(0.9197);">P</span>
<span class="t" style="left:968.36px;top:182.94px;font-size:12px;color:#333;transform:scaleX(0.9197);">Q</span>
<span class="t" style="left:1026.17px;top:182.94px;font-size:12px;color:#333;transform:scaleX(0.9197);">R</span>
<span class="t" style="left:1083.97px;top:182.94px;font-size:12px;color:#333;transform:scaleX(0.9197);">S</span>
<span class="t" style="left:8.89px;top:200.14px;font-size:12px;color:#2a7550;transform:scaleX(0.9610);">1</span>
<span class="t" style="left:8.89px;top:217.34px;font-size:12px;color:#2a7550;transform:scaleX(0.9610);">2</span>
<span class="t" style="left:8.89px;top:234.54px;font-size:12px;color:#2a7550;transform:scaleX(0.9610);">3</span>
<span class="t" style="left:8.89px;top:251.74px;font-size:12px;color:#2a7550;transform:scaleX(0.9610);">4</span>
<span class="t" style="left:8.89px;top:268.94px;font-size:12px;color:#2a7550;transform:scaleX(0.9610);">5</span>
<span class="t" style="left:8.89px;top:286.14px;font-size:12px;color:#2a7550;transform:scaleX(0.9610);">6</span>
<span class="t" style="left:8.89px;top:303.34px;font-size:12px;color:#262626;transform:scaleX(0.9610);">7</span>
<span class="t" style="left:8.89px;top:320.54px;font-size:12px;color:#262626;transform:scaleX(0.9610);">8</span>
<span class="t" style="left:8.89px;top:337.74px;font-size:12px;color:#262626;transform:scaleX(0.9610);">9</span>
<span class="t" style="left:5.69px;top:354.94px;font-size:12px;color:#262626;transform:scaleX(0.9610);">10</span>
<span class="t" style="left:6.11px;top:372.14px;font-size:12px;color:#262626;transform:scaleX(0.9610);">11</span>
<span class="t" style="left:5.69px;top:389.34px;font-size:12px;color:#262626;transform:scaleX(0.9610);">12</span>
<span class="t" style="left:5.69px;top:406.54px;font-size:12px;color:#262626;transform:scaleX(0.9610);">13</span>
<span class="t" style="left:5.69px;top:423.74px;font-size:12px;color:#262626;transform:scaleX(0.9610);">14</span>
<span class="t" style="left:5.69px;top:440.94px;font-size:12px;color:#262626;transform:scaleX(0.9610);">15</span>
<span class="t" style="left:5.69px;top:458.14px;font-size:12px;color:#262626;transform:scaleX(0.9610);">16</span>
<span class="t" style="left:5.69px;top:475.34px;font-size:12px;color:#262626;transform:scaleX(0.9610);">17</span>
<span class="t" style="left:5.69px;top:492.54px;font-size:12px;color:#262626;transform:scaleX(0.9610);">18</span>
<span class="t" style="left:5.69px;top:509.74px;font-size:12px;color:#262626;transform:scaleX(0.9610);">19</span>
<span class="t" style="left:5.69px;top:526.94px;font-size:12px;color:#262626;transform:scaleX(0.9610);">20</span>
<span class="t" style="left:59.86px;top:200.64px;font-size:11.4px;color:#111;transform:scaleX(1.0116);">100</span>
<span class="t" style="left:123.77px;top:200.64px;font-size:11.4px;color:#111;transform:scaleX(1.0116);">21</span>
<span class="t" style="left:181.27px;top:200.64px;font-size:11.4px;color:#111;transform:scaleX(1.0116);">16</span>
<span class="t" style="left:245.19px;top:200.64px;font-size:11.4px;color:#111;transform:scaleX(1.0116);">6</span>
<span class="t" style="left:302.69px;top:200.64px;font-size:11.4px;color:#111;transform:scaleX(1.0116);">5</span>
<span class="t" style="left:353.77px;top:200.64px;font-size:11.4px;color:#111;transform:scaleX(1.0116);">52</span>
<span class="t" style="left:59.86px;top:217.84px;font-size:11.4px;color:#111;transform:scaleX(1.0116);">200</span>
<span class="t" style="left:123.77px;top:217.84px;font-size:11.4px;color:#111;transform:scaleX(1.0116);">32</span>
<span class="t" style="left:182.13px;top:217.84px;font-size:11.4px;color:#111;transform:scaleX(1.0116);">11</span>
<span class="t" style="left:238.77px;top:217.84px;font-size:11.4px;color:#111;transform:scaleX(1.0116);">83</span>
<span class="t" style="left:296.27px;top:217.84px;font-size:11.4px;color:#111;transform:scaleX(1.0116);">14</span>
<span class="t" style="left:353.77px;top:217.84px;font-size:11.4px;color:#111;transform:scaleX(1.0116);">60</span>
<span class="t" style="left:59.86px;top:235.04px;font-size:11.4px;color:#111;transform:scaleX(1.0116);">300</span>
<span class="t" style="left:123.77px;top:235.04px;font-size:11.4px;color:#111;transform:scaleX(1.0116);">43</span>
<span class="t" style="left:181.27px;top:235.04px;font-size:11.4px;color:#111;transform:scaleX(1.0116);">58</span>
<span class="t" style="left:238.77px;top:235.04px;font-size:11.4px;color:#111;transform:scaleX(1.0116);">54</span>
<span class="t" style="left:296.27px;top:235.04px;font-size:11.4px;color:#111;transform:scaleX(1.0116);">23</span>
<span class="t" style="left:347.36px;top:235.04px;font-size:11.4px;color:#111;transform:scaleX(1.0116);">122</span>
<span class="t" style="left:59.86px;top:252.24px;font-size:11.4px;color:#111;transform:scaleX(1.0116);">321</span>
<span class="t" style="left:123.77px;top:252.24px;font-size:11.4px;color:#111;transform:scaleX(1.0116);">12</span>
<span class="t" style="left:181.27px;top:252.24px;font-size:11.4px;color:#111;transform:scaleX(1.0116);">56</span>
<span class="t" style="left:238.77px;top:252.24px;font-size:11.4px;color:#111;transform:scaleX(1.0116);">66</span>
<span class="t" style="left:296.27px;top:252.24px;font-size:11.4px;color:#111;transform:scaleX(1.0116);">74</span>
<span class="t" style="left:348.22px;top:252.24px;font-size:11.4px;color:#111;transform:scaleX(1.0116);">113</span>
<span class="t" style="left:59.86px;top:269.44px;font-size:11.4px;color:#111;transform:scaleX(1.0116);">400</span>
<span class="t" style="left:123.77px;top:269.44px;font-size:11.4px;color:#111;transform:scaleX(1.0116);">34</span>
<span class="t" style="left:181.27px;top:269.44px;font-size:11.4px;color:#111;transform:scaleX(1.0116);">32</span>
<span class="t" style="left:238.77px;top:269.44px;font-size:11.4px;color:#111;transform:scaleX(1.0116);">12</span>
<span class="t" style="left:296.27px;top:269.44px;font-size:11.4px;color:#111;transform:scaleX(1.0116);">43</span>
<span class="t" style="left:347.36px;top:269.44px;font-size:11.4px;color:#111;transform:scaleX(1.0116);">279</span>
<span class="t" style="left:59.86px;top:286.64px;font-size:11.4px;color:#111;transform:scaleX(1.0116);">654</span>
<span class="t" style="left:123.77px;top:286.64px;font-size:11.4px;color:#111;transform:scaleX(1.0116);">23</span>
<span class="t" style="left:181.27px;top:286.64px;font-size:11.4px;color:#111;transform:scaleX(1.0116);">43</span>
<span class="t" style="left:238.77px;top:286.64px;font-size:11.4px;color:#111;transform:scaleX(1.0116);">33</span>
<span class="t" style="left:296.27px;top:286.64px;font-size:11.4px;color:#111;transform:scaleX(1.0116);">43</span>
<span class="t" style="left:347.36px;top:286.64px;font-size:11.4px;color:#111;transform:scaleX(1.0116);">512</span>
<svg class="a" style="left:0px;top:0px" width="1117" height="545" viewBox="0 0 1117 545"><rect x="310.9" y="197.8" width="62.2" height="102" fill="none" stroke="#ed1c24" stroke-width="3.8"/></svg>
<svg class="a" style="left:0px;top:0px" width="1117" height="545" viewBox="0 0 1117 545"><rect x="370.5" y="301.5" width="17" height="17" fill="#fff" stroke="#a6a6a6" stroke-width="1"/><rect x="372.7" y="304.3" width="5.6" height="6.7" fill="#fff" stroke="#8a8a8a" stroke-width="0.8"/><rect x="373.1" y="304.7" width="4.8" height="3" fill="#3c6fd8"/><rect x="378.3" y="304.3" width="6" height="3" fill="#fff" stroke="#9a9a9a" stroke-width="0.8"/><path d="M372.4 314.8 H378.8" stroke="#a8a8a8" stroke-width="1" stroke-dasharray="1.2 1.2"/><path d="M382.5 311 V315.6 M380.2 313.3 H384.8" stroke="#5a5a5a" stroke-width="1.1"/></svg>
</body></html>
